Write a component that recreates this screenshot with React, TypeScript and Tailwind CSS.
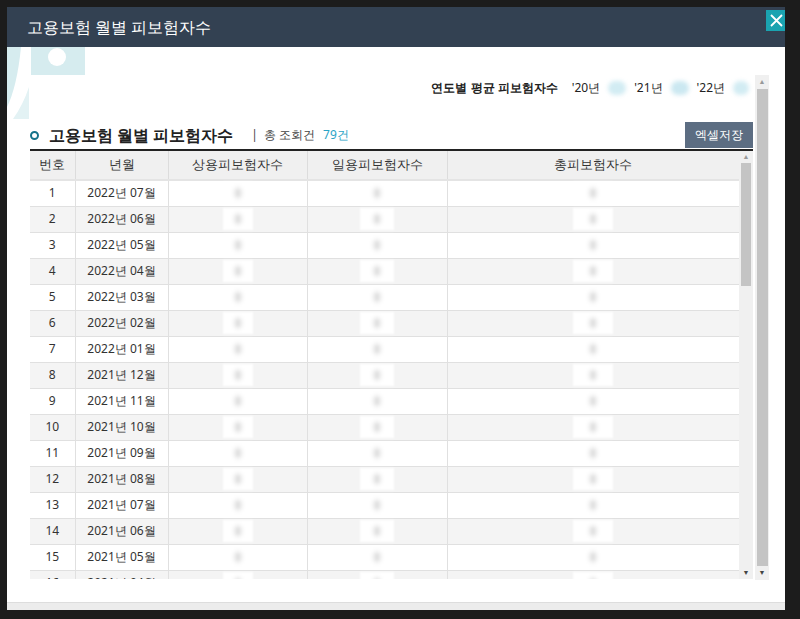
import React from "react";

const months = [
  "2022년 07월", "2022년 06월", "2022년 05월", "2022년 04월", "2022년 03월",
  "2022년 02월", "2022년 01월", "2021년 12월", "2021년 11월", "2021년 10월",
  "2021년 09월", "2021년 08월", "2021년 07월", "2021년 06월", "2021년 05월", "2021년 04월",
];

const Blur = ({ w = "w-[60px]" }: { w?: string }) => (
  <span className={`inline-block ${w} h-[22px] align-middle bg-white blur-[1px]`}>
    <span className="inline-block w-[6px] h-[10px] mt-[6px] rounded-full bg-[#d8d8d8] blur-[2px]" />
  </span>
);

const App = () => {
  return (
    <div className="w-[800px] h-[619px] bg-[#1c1c1c] pt-[7px] pl-[7px] font-['Noto_Sans_CJK_KR','Noto_Sans',sans-serif] overflow-hidden">
      <div className="w-[778px] h-[603px] bg-white flex flex-col relative overflow-hidden">
        {/* header */}
        <div className="h-[40px] bg-[#334152] flex items-center pl-[20px] text-white text-[16px] shrink-0">
          고용보험 월별 피보험자수
        </div>
        <button className="absolute top-[3px] right-[-2px] w-[21px] h-[21px] bg-[#1aa3b0] flex items-center justify-center">
          <svg width="15" height="15" viewBox="0 0 15 15">
            <path d="M2 2 L13 13 M13 2 L2 13" stroke="white" strokeWidth="1.8" />
          </svg>
        </button>
        {/* watermark */}
        <svg className="absolute left-0 top-[40px]" width="80" height="72" viewBox="0 0 80 72">
          <rect x="24" y="0" width="54" height="28" fill="#d6ecef" />
          <circle cx="50" cy="10" r="9" fill="white" />
          <path d="M0 0 L14 0 Q10 40 0 60 Z" fill="#d6ecef" />
          <path d="M6 72 Q16 58 22 40 L22 72 Z" fill="#e3f2f4" />
        </svg>

        <div className="flex flex-1 min-h-0 pl-[23px] pr-[16px] pt-[28px]">
          <div className="flex-1 flex flex-col min-w-0 relative">
            {/* yearly average */}
            <div className="flex justify-end items-center h-[26px] text-[12px] text-[#222] pr-[4px]">
              <span className="font-bold mr-[14px]">연도별 평균 피보험자수</span>
              <span>'20년</span><span className="inline-block w-[18px] h-[14px] mx-[8px] rounded-full bg-[#d2ecf3] blur-[2px]" />
              <span>'21년</span><span className="inline-block w-[18px] h-[14px] mx-[8px] rounded-full bg-[#cbe8f1] blur-[2px]" />
              <span>'22년</span><span className="inline-block w-[16px] h-[14px] ml-[8px] rounded-full bg-[#d2ecf3] blur-[2px]" />
            </div>
            {/* title row */}
            <div className="flex items-end justify-between mt-[22px] h-[26px]">
              <div className="flex items-center pb-[2px]">
                <span className="w-[9px] h-[9px] rounded-full border-[2.5px] border-[#16738a] mr-[10px]" />
                <span className="text-[16px] font-bold text-[#222] mr-[18px]">고용보험 월별 피보험자수</span>
                <span className="text-[12px] text-[#444] mr-[6px]">|</span>
                <span className="text-[12px] text-[#444] mr-[8px]">총 조회건</span>
                <span className="text-[12px] text-[#2aa4c6]">79건</span>
              </div>
              <button className="h-[26px] px-[10px] bg-[#5c6d82] text-white text-[12px] mb-[1px]">엑셀저장</button>
            </div>
            <div className="h-[2px] bg-[#222]" />
            {/* table */}
            <div className="flex flex-1 min-h-0">
              <div className="flex-1 overflow-hidden max-h-[428px]">
                <table className="w-full border-collapse text-[12px] text-[#333] table-fixed">
                  <colgroup>
                    <col className="w-[45px]" /><col className="w-[93px]" /><col className="w-[139px]" /><col className="w-[140px]" /><col />
                  </colgroup>
                  <thead>
                    <tr className="h-[29px] bg-[#f0f0f0]">
                      {["번호", "년월", "상용피보험자수", "일용피보험자수", "총피보험자수"].map((h, i) => (
                        <th key={h} className={`font-normal text-[13px] border-b-2 border-[#e4e4e4] ${i > 0 ? "border-l border-l-[#dcdcdc]" : ""}`}>{h}</th>
                      ))}
                    </tr>
                  </thead>
                  <tbody>
                    {months.map((m, i) => (
                      <tr key={m} className={`h-[26px] ${i % 2 ? "bg-[#f4f4f4]" : "bg-white"} border-b border-[#e0e0e0]`}>
                        <td className="text-center">{i + 1}</td>
                        <td className="text-center border-l border-[#e0e0e0]">{m}</td>
                        <td className="text-center border-l border-[#e0e0e0]"><Blur w="w-[30px]" /></td>
                        <td className="text-center border-l border-[#e0e0e0]"><Blur w="w-[34px]" /></td>
                        <td className="text-center border-l border-[#e0e0e0]"><Blur w="w-[40px]" /></td>
                      </tr>
                    ))}
                  </tbody>
                </table>
              </div>
              <div className="w-[14px] bg-[#f0f0f0] flex flex-col items-center max-h-[428px]">
                <span className="text-[7px] text-[#999] leading-[12px]">▲</span>
                <div className="w-[10px] h-[123px] bg-[#c4c4c4]" />
                <div className="flex-1" />
                <span className="text-[7px] text-[#444] leading-[12px]">▼</span>
              </div>
            </div>
          </div>
          {/* outer scrollbar */}
          <div className="w-[14px] ml-[2px] bg-[#f0f0f0] flex flex-col items-center h-[505px]">
            <span className="text-[7px] text-[#999] leading-[14px]">▲</span>
            <div className="w-[11px] flex-1 bg-[#c4c4c4]" />
            <span className="text-[7px] text-[#444] leading-[14px]">▼</span>
          </div>
        </div>
        <div className="h-[8px] bg-[#ececec] border-t border-[#ddd] shrink-0" />
      </div>
    </div>
  );
};

export default App;
